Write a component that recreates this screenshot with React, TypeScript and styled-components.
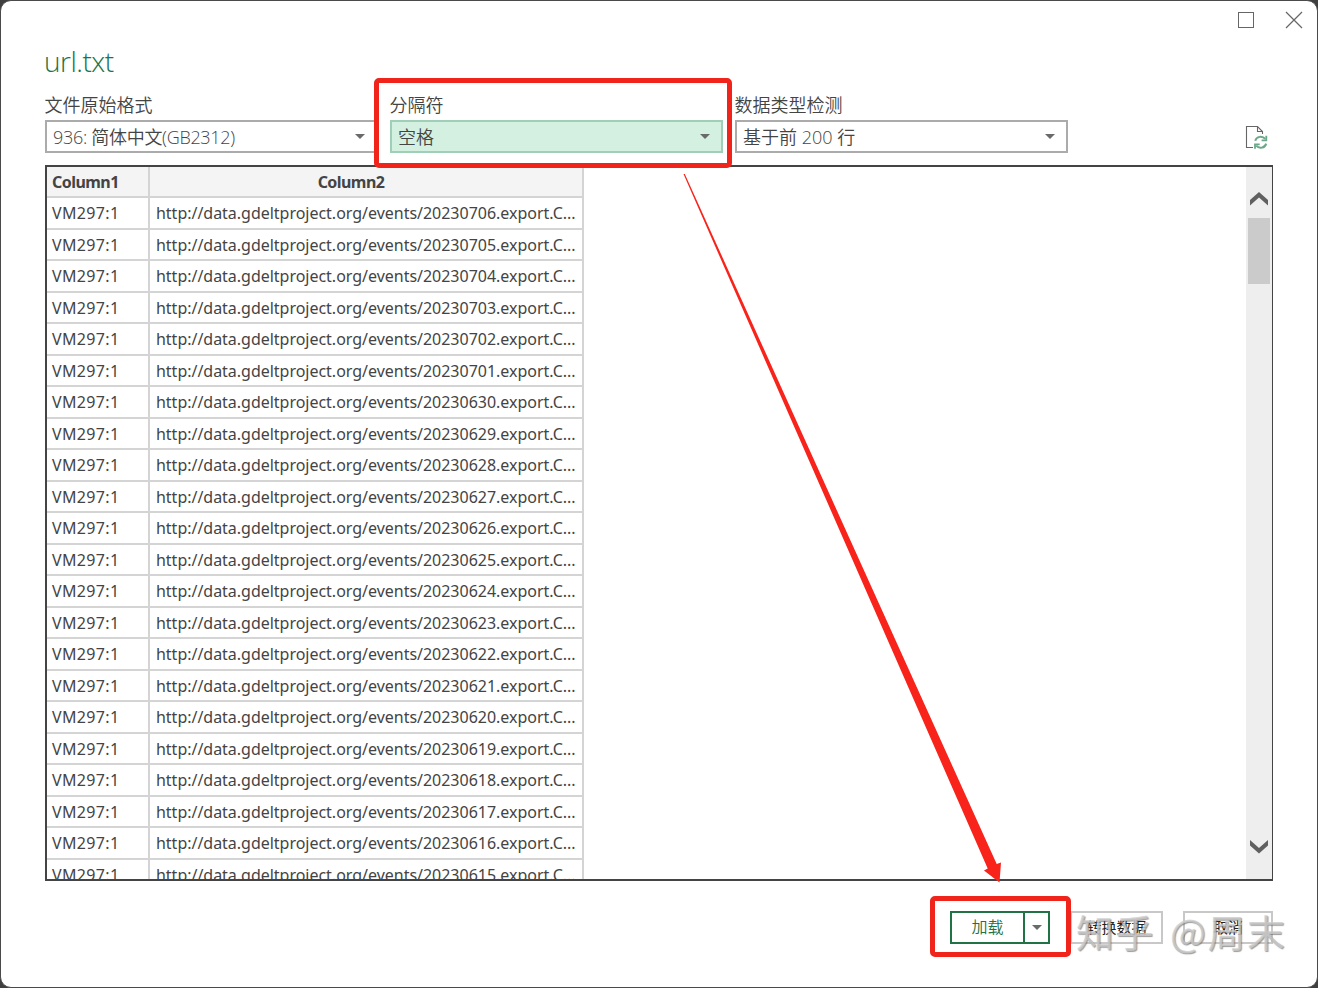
import React from "react";
import styled, { createGlobalStyle } from "styled-components";

const Global = createGlobalStyle`
  * { box-sizing: border-box; }
  body { margin: 0; background: #3f3f3f; overflow: hidden; }
`;

const latin = `"Noto Sans", "Noto Sans CJK SC", sans-serif`;
const ui = `"Noto Sans CJK SC", sans-serif`;

const Dialog = styled.main`
  position: relative;
  width: 1318px;
  height: 988px;
  padding: 0 44px;
  border: 1px solid #4a4a4a;
  border-radius: 11px;
  background: #fff;
  color: #444;
  font-family: ${ui};
  display: flex;
  flex-direction: column;
`;

const TitleBar = styled.header`
  height: 38px;
  margin-right: -30px;
  display: flex;
  justify-content: flex-end;
  align-items: center;
  gap: 30px;
`;

const Title = styled.h1`
  margin: 0 0 0 -1px;
  height: 54px;
  font: 300 28px/44px "Open Sans", "Noto Sans", sans-serif;
  letter-spacing: -0.5px;
  color: #217346;
`;

const Controls = styled.section`
  display: flex;
  gap: 12px;
  height: 72px;
`;

const Field = styled.div`
  width: 333px;
`;

const Label = styled.div`
  height: 27px;
  margin-left: -0.5px;
  line-height: 23px;
  font-size: 18px;
  font-weight: 350;
`;

const Select = styled.div<{ $active?: boolean }>`
  height: 33px;
  padding: 0 11px 0 6px;
  border: 2px solid ${(p) => (p.$active ? "#9fcfb7" : "#ababab")};
  background: ${(p) => (p.$active ? "#d3f0e0" : "#fff")};
  display: flex;
  align-items: center;
  justify-content: space-between;
  font: 350 18px/28px "Open Sans", "Noto Sans CJK SC", sans-serif;
`;

const Value = styled.span<{ $spacing?: number }>`
  letter-spacing: ${(p) => p.$spacing ?? 0}px;
`;

const Caret = styled.i`
  border: 5px solid transparent;
  border-top-color: #6a6a6a;
  border-bottom: 0;
`;

const RefreshSlot = styled.div`
  margin-left: auto;
  padding: 32px 5px 0 0;
`;

const Preview = styled.section`
  flex: none;
  height: 716px;
  width: 1228px;
  border: 2px solid #444;
  border-right-width: 1px;
  display: flex;
  justify-content: space-between;
  overflow: hidden;
`;

const Grid = styled.div`
  width: 537px;
  font-family: ${latin};
`;

const Row = styled.div<{ $head?: boolean }>`
  display: grid;
  grid-template-columns: 103px 434px;
  grid-template-rows: 100%;
  height: ${(p) => (p.$head ? 31 : 31.5)}px;
  background: ${(p) => (p.$head ? "#f4f4f4" : "#fff")};
  font-size: 16px;
  font-weight: ${(p) => (p.$head ? 700 : 400)};
  line-height: 31px;
`;

const Cell = styled.div<{ $spacing: number }>`
  border-right: 2px solid #d4d4d4;
  border-bottom: 2px solid #d4d4d4;
  padding-left: 5px;
  white-space: nowrap;
  letter-spacing: ${(p) => p.$spacing}px;
`;

const UrlCell = styled(Cell)`
  padding-left: 6px;
`;

const UrlHeading = styled(Cell)`
  padding: 0 30px 0 0;
  text-align: center;
`;

const Scrollbar = styled.div`
  width: 26px;
  background: #eee;
  display: flex;
  flex-direction: column;
  align-items: center;
  justify-content: space-between;
  padding: 25px 1px 25px 0;
`;

const ScrollTop = styled.div`
  display: flex;
  flex-direction: column;
  align-items: center;
  gap: 12px;
`;

const Thumb = styled.div`
  width: 22px;
  height: 66px;
  background: #cbcbcb;
`;

const Footer = styled.footer`
  display: flex;
  justify-content: flex-end;
  padding-top: 30px;
  gap: 20px;
`;

const Split = styled.div`
  width: 100px;
  height: 33px;
  border: 2px solid #217346;
  display: flex;
  color: #217346;
  font-size: 16px;
  font-weight: 350;
  line-height: 27px;
`;

const SplitLabel = styled.span`
  flex: 1;
  text-align: center;
`;

const SplitArrow = styled.span`
  width: 25px;
  border-left: 2px solid #217346;
  display: flex;
  align-items: center;
  justify-content: center;
`;

const Plain = styled.div<{ $w: number }>`
  width: ${(p) => p.$w}px;
  height: 33px;
  border: 2px solid #c8c8c8;
  text-align: center;
  font-size: 15px;
  line-height: 27px;
  color: #222;
`;

const Watermark = styled.div`
  position: absolute;
  left: 1075px;
  top: 903px;
  font-size: 38px;
  line-height: 54px;
  letter-spacing: 1.5px;
  word-spacing: 5px;
  white-space: nowrap;
  color: rgba(205, 205, 205, 0.8);
  text-shadow: 1px 1px 1px rgba(90, 90, 90, 0.6);
`;

const Highlight = styled.div<{ $x: number; $y: number; $w: number; $h: number }>`
  position: absolute;
  left: ${(p) => p.$x}px;
  top: ${(p) => p.$y}px;
  width: ${(p) => p.$w}px;
  height: ${(p) => p.$h}px;
  border: 5px solid #f0241b;
  border-radius: 5px;
`;

const Arrow = styled.svg`
  position: absolute;
  left: -1px;
  top: -1px;
  pointer-events: none;
`;

const dates = [
  ...[6, 5, 4, 3, 2, 1].map((d) => `2023070${d}`),
  ...Array.from({ length: 16 }, (_, i) => `202306${30 - i}`),
];

const Chevron = ({ down = false }: { down?: boolean }) => (
  <svg width="18" height="14" viewBox="0 0 18 14">
    <path d={down ? "M0 0 L9 8 L18 0 V5.5 L9 13.5 L0 5.5Z" : "M0 13.5 L9 5.5 L18 13.5 V8 L9 0 L0 8Z"} fill="#606060" />
  </svg>
);

const RefreshIcon = () => (
  <svg width="23" height="25" viewBox="0 0 23 25" fill="none">
    <path d="M8 22.5H1.5V1.5H12.5L17.5 6.5V9M12.5 1.5V6.5H17.5" stroke="#666" strokeWidth="1.1" />
    <path d="M10.2 15.8A5.8 5.8 0 0 1 20.2 13.9M21.2 18.6A5.8 5.8 0 0 1 11.2 20.7" stroke="#6ba88a" strokeWidth="2" />
    <path d="M21.3 10.8V15.3H16.6M10 23.8V19.3H14.7" stroke="#6ba88a" strokeWidth="1.8" />
  </svg>
);

export default function App() {
  return (
    <>
      <Global />
      <Dialog>
        <TitleBar>
          <svg width="17" height="17" viewBox="0 0 17 17">
            <rect x="0.5" y="0.5" width="15" height="15" fill="none" stroke="#666" />
          </svg>
          <svg width="18" height="18" viewBox="0 0 18 18">
            <path d="M1 1L17 17M17 1L1 17" stroke="#666" strokeWidth="1.2" />
          </svg>
        </TitleBar>
        <Title>url.txt</Title>
        <Controls>
          <Field>
            <Label>文件原始格式</Label>
            <Select><Value $spacing={-0.3}>936: 简体中文(GB2312)</Value><Caret /></Select>
          </Field>
          <Field>
            <Label>分隔符</Label>
            <Select $active><Value>空格</Value><Caret /></Select>
          </Field>
          <Field>
            <Label>数据类型检测</Label>
            <Select><Value>基于前 200 行</Value><Caret /></Select>
          </Field>
          <RefreshSlot><RefreshIcon /></RefreshSlot>
        </Controls>
        <Preview>
          <Grid>
            <Row $head>
              <Cell $spacing={-0.55}>Column1</Cell>
              <UrlHeading $spacing={-0.55}>Column2</UrlHeading>
            </Row>
            {dates.map((d) => (
              <Row key={d}>
                <Cell $spacing={0.35}>VM297:1</Cell>
                <UrlCell $spacing={-0.02}>{`http://data.gdeltproject.org/events/${d}.export.C...`}</UrlCell>
              </Row>
            ))}
          </Grid>
          <Scrollbar>
            <ScrollTop><Chevron /><Thumb /></ScrollTop>
            <Chevron down />
          </Scrollbar>
        </Preview>
        <Footer>
          <Split>
            <SplitLabel>加载</SplitLabel>
            <SplitArrow><Caret /></SplitArrow>
          </Split>
          <Plain $w={93}>转换数据</Plain>
          <Plain $w={90}>取消</Plain>
        </Footer>
        <Watermark>知乎 @周末</Watermark>
        <Highlight $x={373} $y={77} $w={358} $h={90} />
        <Highlight $x={929} $y={895} $w={141} $h={61} />
        <Arrow width="1318" height="988" viewBox="0 0 1318 988">
          <path d="M683.5 174L684.8 174L996.7 864L1001 862.5L999.5 882.5L984 870.5L987.7 868.5Z" fill="#f8231a" />
        </Arrow>
      </Dialog>
    </>
  );
}
